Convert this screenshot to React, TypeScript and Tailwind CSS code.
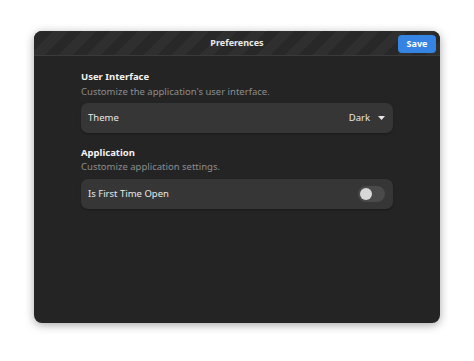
export default function App() {
  return (
    <div className="w-[474px] h-[361px] bg-white pt-[31px] pl-[34px] font-['Noto_Sans',sans-serif]">
      <div className="w-[406px] h-[292px] rounded-[8px] bg-[#242424] overflow-hidden shadow-[0_2px_10px_rgba(0,0,0,0.35)] flex flex-col">
        {/* Header bar */}
        <div className="relative h-[25px] flex items-center justify-center border-b border-[#3a3a3a] bg-[repeating-linear-gradient(-45deg,#2f2f2f_0px,#2f2f2f_10px,#282828_10px,#282828_20px)]">
          <span className="text-[9px] font-bold text-[#ececec]">Preferences</span>
          <button className="absolute right-[4px] top-[4px] h-[18px] w-[38px] rounded-[4px] bg-[#3584e4] text-white text-[9px] font-bold">
            Save
          </button>
        </div>

        {/* Content */}
        <div className="px-[47px] pt-[14px] flex flex-col">
          <div className="text-[9.5px] font-bold text-[#f2f2f2] leading-[14px]">User Interface</div>
          <div className="text-[9.5px] text-[#8e8e8e] leading-[14px] mt-[1px]">
            Customize the application's user interface.
          </div>
          <div className="mt-[4px] h-[30px] rounded-[7px] bg-[#363636] flex items-center justify-between pl-[7px] pr-[8px] shadow-[0_1px_2px_rgba(0,0,0,0.3)]">
            <span className="text-[9.5px] text-[#e8e8e8]">Theme</span>
            <div className="flex items-center gap-[8px]">
              <span className="text-[9.5px] text-[#e8e8e8]">Dark</span>
              <svg width="7" height="4" viewBox="0 0 7 4">
                <path d="M0 0 L7 0 L3.5 4 Z" fill="#e8e8e8" />
              </svg>
            </div>
          </div>

          <div className="mt-[13px] text-[9.5px] font-bold text-[#f2f2f2] leading-[14px]">Application</div>
          <div className="text-[9.5px] text-[#8e8e8e] leading-[14px]">
            Customize application settings.
          </div>
          <div className="mt-[5px] h-[30px] rounded-[7px] bg-[#363636] flex items-center justify-between pl-[7px] pr-[8px] shadow-[0_1px_2px_rgba(0,0,0,0.3)]">
            <span className="text-[9.5px] text-[#e8e8e8]">Is First Time Open</span>
            <div className="w-[27px] h-[16px] rounded-full bg-[#4a4a4a] flex items-center px-[2px]">
              <div className="w-[12px] h-[12px] rounded-full bg-[#d8d8d8]" />
            </div>
          </div>
        </div>
      </div>
    </div>
  );
}
